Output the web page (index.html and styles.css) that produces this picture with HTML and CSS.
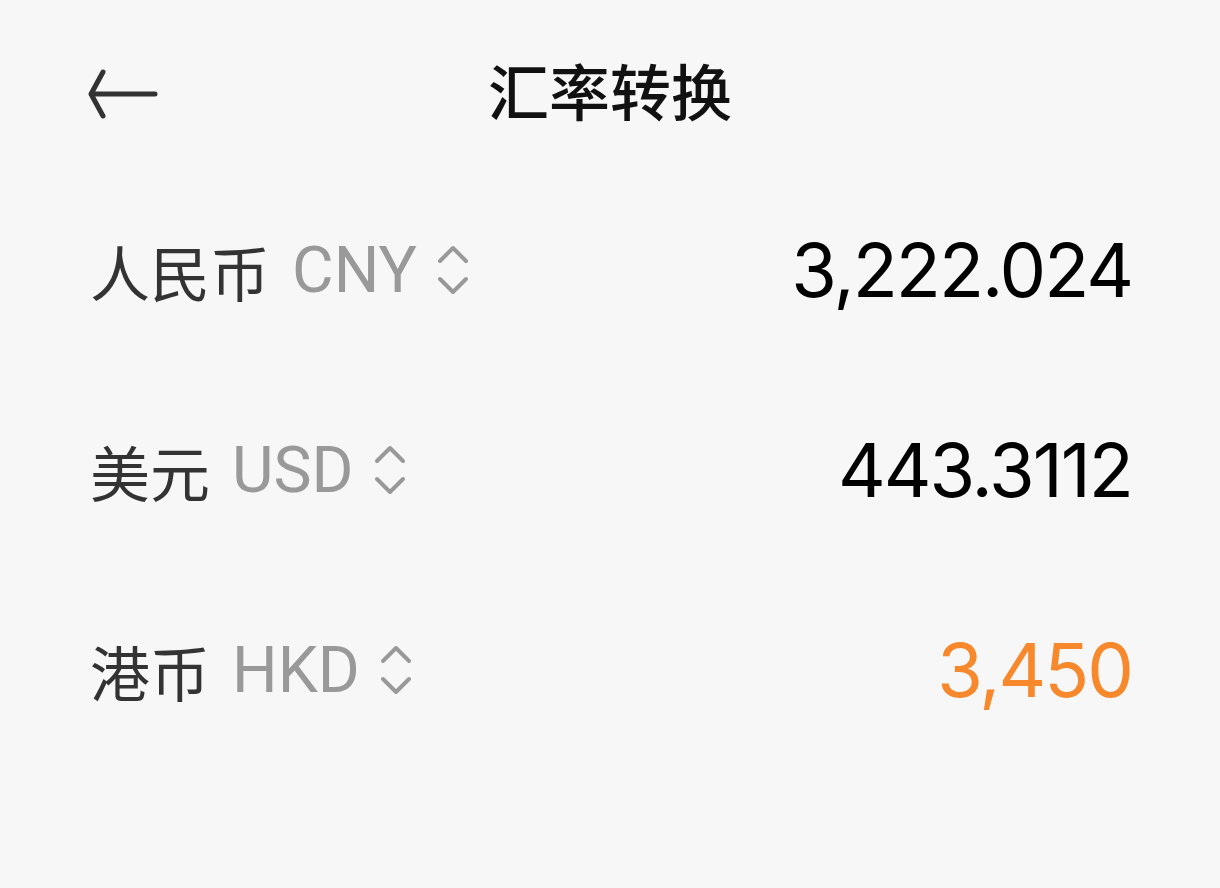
FILE: index.html
```html
<!DOCTYPE html>
<html lang="zh-CN">
<head>
    <meta charset="UTF-8">
    <meta name="viewport" content="width=device-width, initial-scale=1.0">
    <title>汇率转换</title>
    <link rel="stylesheet" href="styles.css">
</head>
<body>
    <div class="page">
        <div class="header">
            <button class="back" aria-label="返回">
                <svg width="72" height="52" viewBox="0 0 72 52">
                    <path d="M3 26 H67 M15 4 L3 26 L15 48" fill="none" stroke="#333" stroke-width="5" stroke-linecap="round" stroke-linejoin="round"/>
                </svg>
            </button>
            <h1>汇率转换</h1>
        </div>

        <ul class="list">
            <li class="row">
                <div class="currency">
                    <span class="name">人民币</span>
                    <span class="code">CNY</span>
                    <svg class="swap" width="32" height="52" viewBox="0 0 32 52">
                        <path d="M3 17 L16 4 L29 17 M3 35 L16 48 L29 35" fill="none" stroke="#999" stroke-width="4" stroke-linecap="round" stroke-linejoin="round"/>
                    </svg>
                </div>
                <span class="amount">3,222.024</span>
            </li>
            <li class="row">
                <div class="currency">
                    <span class="name">美元</span>
                    <span class="code">USD</span>
                    <svg class="swap" width="32" height="52" viewBox="0 0 32 52">
                        <path d="M3 17 L16 4 L29 17 M3 35 L16 48 L29 35" fill="none" stroke="#999" stroke-width="4" stroke-linecap="round" stroke-linejoin="round"/>
                    </svg>
                </div>
                <span class="amount">443.3112</span>
            </li>
            <li class="row">
                <div class="currency">
                    <span class="name">港币</span>
                    <span class="code">HKD</span>
                    <svg class="swap" width="32" height="52" viewBox="0 0 32 52">
                        <path d="M3 17 L16 4 L29 17 M3 35 L16 48 L29 35" fill="none" stroke="#999" stroke-width="4" stroke-linecap="round" stroke-linejoin="round"/>
                    </svg>
                </div>
                <span class="amount active">3,450</span>
            </li>
        </ul>
    </div>
</body>
</html>
```

FILE: styles.css
```css
html, body {
    margin: 0;
    padding: 0;
    background-color: #f7f7f7;
}
body {
    font-family: Roboto, "Noto Sans", "Noto Sans CJK SC", sans-serif;
    color: #333;
}
.page {
    width: 1220px;
    height: 888px;
    overflow: hidden;
}
.header {
    position: relative;
    height: 150px;
    padding-top: 14px;
    display: flex;
    align-items: center;
    justify-content: center;
}
.back {
    position: absolute;
    left: 88px;
    top: 68px;
    background: none;
    border: none;
    padding: 0;
    margin: 0;
    display: flex;
    cursor: pointer;
}
.header h1 {
    margin: 0;
    font-family: "Noto Sans CJK SC", sans-serif;
    font-size: 61px;
    font-weight: 500;
    color: #111;
    line-height: 1;
}
.list {
    list-style: none;
    margin: 6px 0 0;
    padding: 0 90px;
}
.row {
    height: 200px;
    display: flex;
    align-items: center;
    justify-content: space-between;
}
.currency {
    display: flex;
    align-items: center;
}
.name {
    font-family: "Noto Sans CJK SC", sans-serif;
    font-size: 60px;
    color: #333;
    margin-right: 22px;
}
.code {
    font-size: 64px;
    color: #999;
    margin-right: 20px;
}
.swap {
    display: block;
}
.amount {
    font-family: Inter, Roboto, sans-serif;
    font-size: 74px;
    color: #000;
    letter-spacing: -2px;
    margin-right: -2px;
}
.amount.active {
    color: #f7892c;
}
```
